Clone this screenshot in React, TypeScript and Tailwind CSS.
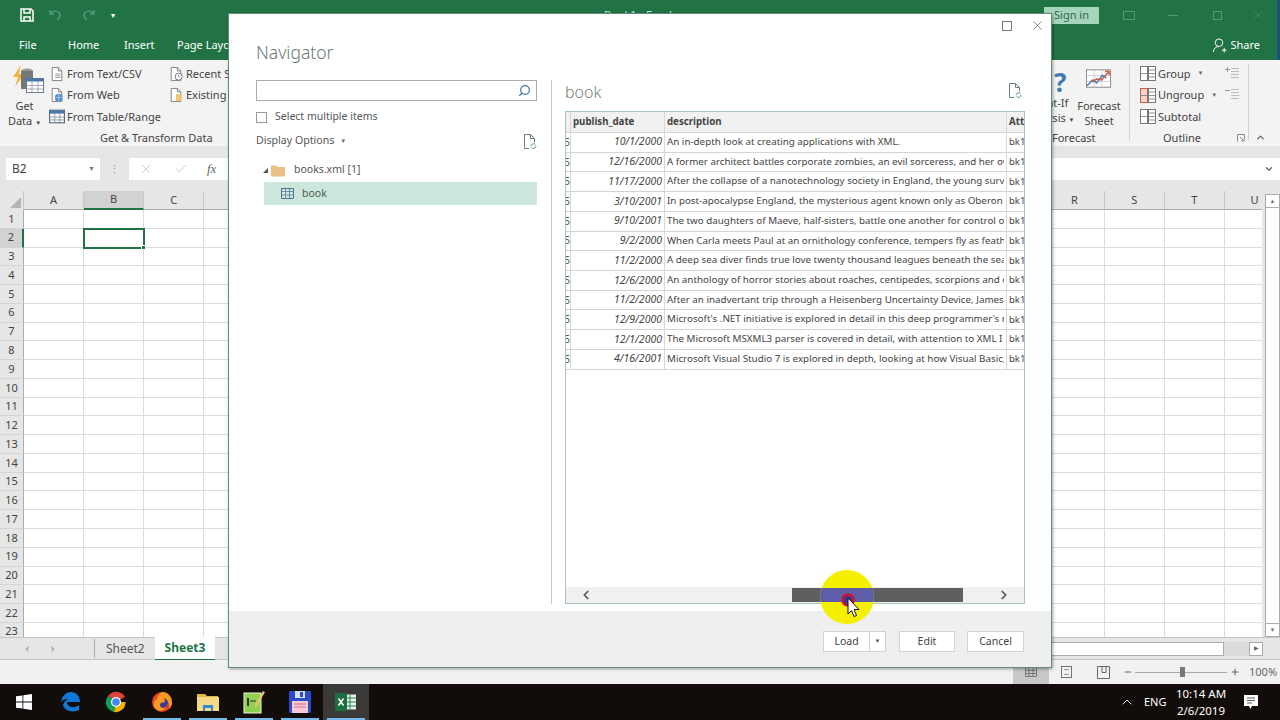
import React from "react";
import { ChevronLeft, ChevronRight, ChevronUp, ChevronDown, Check, X, Search, Minus, Plus } from "lucide-react";

const columns = ["A", "B", "C", "D", "E", "F", "G", "H", "I", "J", "K", "L", "M", "N", "O", "P", "Q", "R", "S", "T", "U"];
const rowNumbers = Array.from({ length: 23 }, (_, i) => i + 1);

const books = [
  ["10/1/2000", "An in-depth look at creating applications with XML."],
  ["12/16/2000", "A former architect battles corporate zombies, an evil sorceress, and her ow"],
  ["11/17/2000", "After the collapse of a nanotechnology society in England, the young survi"],
  ["3/10/2001", "In post-apocalypse England, the mysterious agent known only as Oberon h"],
  ["9/10/2001", "The two daughters of Maeve, half-sisters, battle one another for control o"],
  ["9/2/2000", "When Carla meets Paul at an ornithology conference, tempers fly as feath"],
  ["11/2/2000", "A deep sea diver finds true love twenty thousand leagues beneath the sea"],
  ["12/6/2000", "An anthology of horror stories about roaches, centipedes, scorpions and o"],
  ["11/2/2000", "After an inadvertant trip through a Heisenberg Uncertainty Device, James"],
  ["12/9/2000", "Microsoft's .NET initiative is explored in detail in this deep programmer's r"],
  ["12/1/2000", "The Microsoft MSXML3 parser is covered in detail, with attention to XML I"],
  ["4/16/2001", "Microsoft Visual Studio 7 is explored in depth, looking at how Visual Basic,"],
];

const TableIcon = ({ className = "" }: { className?: string }) => (
  <svg viewBox="0 0 14 12" className={className} fill="none">
    <rect x="0.5" y="0.5" width="13" height="11" fill="#fff" stroke="#5b6b7c" />
    <rect x="0.5" y="0.5" width="13" height="3" fill="#4a78a8" />
    <path d="M0.5 6.5h13M0.5 9h13M5 3.5v8M9.5 3.5v8" stroke="#7c8894" strokeWidth="0.7" />
  </svg>
);

const DocIcon = ({ className = "", children }: { className?: string; children?: React.ReactNode }) => (
  <svg viewBox="0 0 16 18" className={className} fill="none">
    <path d="M2.5 1.5h7l4 4v11h-11z" fill="#fff" stroke="#777" />
    <path d="M9.5 1.5v4h4" stroke="#777" />
    {children}
  </svg>
);

const RefreshDoc = () => (
  <svg viewBox="0 0 14 17" className="h-[17px] w-[14px]" fill="none" stroke="#6f7f7a">
    <path d="M6 15.5H1.5v-14h6l4 4v4" />
    <path d="M7.5 1.5v4h4" />
    <path d="M8 13a2.5 2.5 0 0 1 4.5-1.2M13 13a2.5 2.5 0 0 1-4.5 1.4" stroke="#4f9a80" />
  </svg>
);

const SmallCommand = ({ icon, label, caret }: { icon: React.ReactNode; label: string; caret?: boolean }) => (
  <div className="flex h-[21.5px] items-center gap-[3px] whitespace-nowrap text-[11px] text-[#444]">
    <span className="flex w-[15px] justify-center">{icon}</span>
    {label}
    {caret && <span className="ml-[4px] text-[6px] text-[#666]">▼</span>}
  </div>
);

const OutlineIcon = ({ tint }: { tint?: boolean }) => (
  <svg viewBox="0 0 16 15" className="h-[15px] w-[16px] shrink-0" fill="none" stroke="#777">
    <rect x="0.5" y="0.5" width="7" height="14" fill={tint ? "#f3d3cd" : "#fff"} stroke={tint ? "#c9604c" : "#777"} />
    <rect x="8.5" y="0.5" width="7" height="14" fill="#fff" />
    <path d="M8.5 4h7M8.5 7.5h7M8.5 11h7M0.5 7.5h7" strokeWidth="0.8" />
  </svg>
);

const LevelIcon = ({ sign }: { sign: "+" | "-" }) => (
  <svg viewBox="0 0 14 14" className="h-[14px] w-[14px]" fill="none" stroke="#b5b5b5">
    <path d="M6 2.500h8M6 5.500h8M6 8.500h8M6 11.500h8" strokeWidth="0.9" />
    <path d={sign === "+" ? "M0 3.500h5M2.500 1v5" : "M0 3.500h5"} stroke="#999" />
  </svg>
);

const Ribbon = () => (
  <div className="flex h-[86px] shrink-0 bg-[#f3f3f3] text-[11px] text-[#444]">
    <div className="flex w-[228px] shrink-0 flex-col">
      <div className="flex h-[68px]">
        <div className="flex w-[49px] shrink-0 flex-col items-center pt-[5px] leading-[15px]">
          <svg viewBox="0 0 32 30" className="ml-[6px] h-[30px] w-[32px] shrink-0" fill="none">
            <path d="M9 0 1 12h5L3 22l9-13H7z" fill="#f2b33d" />
            <ellipse cx="15" cy="6" rx="6" ry="2.5" fill="#9a9a9a" />
            <rect x="9" y="6" width="12" height="18" fill="#777" />
            <rect x="14.5" y="13.5" width="17" height="14" fill="#fff" stroke="#6b7b8c" />
            <rect x="14.5" y="13.5" width="17" height="3" fill="#4a78a8" />
            <path d="M14.5 20.5h17M14.5 24h17M20 16.5v11M26 16.5v11" stroke="#889" strokeWidth="0.7" />
          </svg>
          <span className="mt-[3px]">Get</span>
          <span>
            Data <span className="text-[6px]">▼</span>
          </span>
        </div>
        <div className="w-[119px] shrink-0 pt-[3px]">
          <SmallCommand
            label="From Text/CSV"
            icon={
              <DocIcon className="h-[16px] w-[14px]">
                <path d="M6 9h6M6 11h6M6 13h6" stroke="#777" strokeWidth="0.8" />
              </DocIcon>
            }
          />
          <SmallCommand
            label="From Web"
            icon={
              <DocIcon className="h-[16px] w-[14px]">
                <circle cx="10" cy="12" r="4.5" fill="#4f8fd0" />
                <path d="M5.5 12h9M10 7.5v9" stroke="#cfe3f5" strokeWidth="0.7" />
              </DocIcon>
            }
          />
          <SmallCommand label="From Table/Range" icon={<TableIcon className="h-[15px] w-[16px] shrink-0" />} />
        </div>
        <div className="pt-[3px]">
          <SmallCommand
            label="Recent Sources"
            icon={
              <DocIcon className="h-[16px] w-[14px]">
                <circle cx="11" cy="12" r="4" fill="#fff" stroke="#667" />
                <path d="M11 10v2l1.5 1" stroke="#667" strokeWidth="0.8" />
              </DocIcon>
            }
          />
          <SmallCommand
            label="Existing Connections"
            icon={
              <DocIcon className="h-[16px] w-[14px]">
                <rect x="8" y="8" width="6" height="8" fill="#f2c66d" />
              </DocIcon>
            }
          />
        </div>
      </div>
      <div className="pl-[100px] pt-[2px] leading-[15px]">Get &amp; Transform Data</div>
    </div>
    <div className="ml-auto flex">
      <div className="flex w-[109px] flex-col">
        <div className="flex h-[68px]">
          <div className="flex w-[58.5px] shrink-0 flex-col leading-[15px]">
            <div className="flex h-[38px] flex-col items-end pr-[12px] pt-[9px]">
              <span className="text-[26px] font-bold leading-[26px] text-[#3f78b8]">?</span>
            </div>
            <span className="text-center">What-If</span>
            <span className="whitespace-nowrap text-center">
              Analysis <span className="text-[6px]">▼</span>
            </span>
          </div>
          <div className="flex w-[41px] shrink-0 flex-col items-center pt-[8px] leading-[15px]">
            <svg viewBox="0 0 28 24" className="h-[24px] w-[27px] shrink-0" fill="none">
              <rect x="0.5" y="1.5" width="25" height="18" fill="#fff" stroke="#888" />
              <path d="M0.5 7.5h25M0.5 13.5h25M8.5 1.5v18M16.5 1.5v18" stroke="#bbb" strokeWidth="0.7" />
              <path d="M1 18l6-6 4 3 6-8 4 3" stroke="#3f78b8" strokeWidth="1.5" />
              <path d="M6 14l5-3 5 1 8-9M24 3h-4M24 3v4" stroke="#d2573c" strokeWidth="1.5" />
            </svg>
            <span className="mt-[6px]">Forecast</span>
            <span>Sheet</span>
          </div>
        </div>
        <div className="pl-[32px] pt-[2px] leading-[15px]">Forecast</div>
      </div>
      <div className="mb-[6px] mt-[4px] w-px bg-[#d0d0d0]" />
      <div className="flex w-[118px] flex-col">
        <div className="flex h-[68px] pl-[10px] pt-[3px]">
          <div>
            <SmallCommand label="Group" caret icon={<OutlineIcon />} />
            <SmallCommand label="Ungroup" caret icon={<OutlineIcon tint />} />
            <SmallCommand label="Subtotal" icon={<OutlineIcon />} />
          </div>
          <div className="ml-auto mr-[9px] flex flex-col gap-[7px] pt-[3px]">
            <LevelIcon sign="+" />
            <LevelIcon sign="-" />
          </div>
        </div>
        <div className="flex items-center pl-[33px] pt-[2px] leading-[15px]">
          Outline
          <svg viewBox="0 0 8 8" className="ml-auto mr-[3px] h-[8px] w-[8px]" fill="none" stroke="#888">
            <path d="M.5 7.500v-7h7v4M3 3l4 4M7 4.500V7H4.500" />
          </svg>
        </div>
      </div>
      <div className="mb-[6px] mt-[4px] w-px bg-[#d0d0d0]" />
      <div className="flex w-[31px] items-end justify-center pb-[3px]">
        <ChevronUp size={11} strokeWidth={3} className="mr-[8px] text-[#666]" />
      </div>
    </div>
  </div>
);

const TitleBar = () => (
  <div className="flex h-[30px] shrink-0 items-center text-white">
    <svg viewBox="0 0 14 14" className="ml-[20px] h-[14px] w-[14px]" fill="none" stroke="#fff" strokeWidth="1.5">
      <path d="M1 1h10l2 2v10H1z" />
      <path d="M4 1v4h6V1M4 13V9h6v4" />
    </svg>
    <svg viewBox="0 0 16 12" className="ml-[15px] h-[12px] w-[16px]" fill="none" stroke="#57967a" strokeWidth="1.5">
      <path d="M1 1v4h4M1 5c3-4 9-4 10 1 0 2-2 4-3 5" />
    </svg>
    <svg viewBox="0 0 16 12" className="ml-[16px] h-[12px] w-[16px]" fill="none" stroke="#57967a" strokeWidth="1.5">
      <path d="M13 1v4H9M13 5C10 1 4 1 3 6c0 2 2 4 3 5" />
    </svg>
    <span className="ml-[14px] text-[8px] leading-none">▾</span>
    <span className="ml-[489px] text-[11px] text-[#d7e8df]">Book1 - Excel</span>
    <div className="ml-auto flex items-center">
      <div className="mr-[8px] flex h-[17px] w-[55px] items-center justify-center bg-[#a6d5bb] text-[11px] text-[#2f6b4d]">
        Sign in
      </div>
      <div className="flex w-[44px] justify-center">
        <div className="h-[9px] w-[12px] border border-[#57967a]" />
      </div>
      <div className="flex w-[44px] justify-center">
        <div className="h-px w-[10px] bg-[#57967a]" />
      </div>
      <div className="flex w-[44px] justify-center">
        <div className="h-[9px] w-[9px] border border-[#57967a]" />
      </div>
      <div className="flex w-[38px] justify-center">
        <X size={14} strokeWidth={1} className="text-[#57967a]" />
      </div>
    </div>
  </div>
);

const TabRow = () => (
  <div className="flex h-[30px] shrink-0 items-center whitespace-nowrap text-[11px] text-white">
    <span className="ml-[19px] w-[49px]">File</span>
    <span className="w-[56px]">Home</span>
    <span className="w-[53px]">Insert</span>
    <span>Page Layout</span>
    <div className="ml-auto mr-[17px] flex items-center gap-[3px]">
      <svg viewBox="0 0 15 16" className="h-[15px] w-[15px]" fill="none" stroke="#fff">
        <circle cx="7" cy="5" r="4" />
        <path d="M1 15c0-4 3-6 6-6M10 13h5M12.500 10.500v5" />
      </svg>
      Share
    </div>
  </div>
);

const Sheet = () => (
  <div className="flex min-h-0 flex-1 overflow-hidden bg-[#e6e6e6]">
    <div className="w-[1262px] shrink-0 overflow-hidden">
      <div className="flex h-[19px] text-[11px] text-[#444]">
        <div className="flex w-[24px] shrink-0 items-end justify-end border-r border-[#c6c6c6] p-[2px]">
          <div className="h-0 w-0 border-b-[11px] border-l-[11px] border-b-[#b5b5b5] border-l-transparent" />
        </div>
        {columns.map((c) => (
          <div
            key={c}
            className={`flex w-[60.06px] shrink-0 items-center justify-center border-r border-[#c6c6c6] border-b ${
              c === "B" ? "border-b-2 border-b-[#217346] bg-[#d2d2d2]" : "border-b-[#ababab]"
            }`}
          >
            {c}
          </div>
        ))}
      </div>
      {rowNumbers.map((n) => (
        <div key={n} className="flex h-[18.77px] text-[11px] text-[#444]">
          <div
            className={`flex w-[24px] shrink-0 items-center justify-center border-b border-r border-b-[#d4d4d4] ${
              n === 2 ? "border-r-2 border-r-[#217346] bg-[#d2d2d2]" : "border-r-[#ababab]"
            }`}
          >
            {n}
          </div>
          {columns.map((c) => (
            <div
              key={c}
              className={`relative w-[60.06px] shrink-0 border-b border-r border-[#dcdcdc] bg-white ${
                n === 2 && c === "B" ? "z-10 outline-2 -outline-offset-1 outline-[#217346]" : ""
              }`}
            >
              {n === 2 && c === "B" && (
                <div className="absolute -bottom-[3px] -right-[3px] h-[5px] w-[5px] border border-white bg-[#217346]" />
              )}
            </div>
          ))}
        </div>
      ))}
    </div>
    <div className="ml-[3px] mt-[3px] flex flex-1 flex-col justify-between border border-[#ababab] bg-white">
      <div className="flex h-[13px] items-center justify-center border-b border-[#ababab] text-[6px] text-[#777]">▲</div>
      <div className="flex h-[13px] items-center justify-center border-t border-[#ababab] text-[6px] text-[#777]">▼</div>
    </div>
  </div>
);

const FormulaBar = () => (
  <div className="flex h-[45px] shrink-0 items-start bg-[#e6e6e6] pt-[12px]">
    <div className="ml-[6px] flex h-[22px] w-[94px] items-center justify-between bg-white pl-[6px] pr-[5px] text-[12px] text-[#444]">
      B2
      <span className="text-[7px] text-[#777]">▼</span>
    </div>
    <div className="flex h-[22px] w-[29px] items-center justify-center text-[11px] text-[#999]">⋮</div>
    <div className="flex h-[22px] flex-1 items-center bg-white pl-[10px]">
      <X size={14} strokeWidth={1.5} className="text-[#c4c4c4]" />
      <Check size={14} strokeWidth={1.5} className="ml-[21px] text-[#c4c4c4]" />
      <span className="ml-[19px] font-['Liberation_Serif',serif] text-[13px] italic text-[#666]">fx</span>
      <ChevronDown size={10} strokeWidth={3} className="ml-auto mr-[6px] text-[#666]" />
    </div>
  </div>
);

const SheetTabs = () => (
  <div className="flex h-[23px] shrink-0 items-center border-y border-[#c6c6c6] bg-[#e6e6e6] text-[12px]">
    <ChevronLeft size={10} fill="#aaa" className="ml-[22px] text-[#aaa]" />
    <ChevronRight size={10} fill="#aaa" className="ml-[16px] text-[#aaa]" />
    <div className="ml-[36px] h-[19px] w-px bg-[#aaa]" />
    <span className="ml-[11px] w-[49px] text-[#555]">Sheet2</span>
    <div className="flex h-[24px] w-[60px] items-center justify-center border-b-2 border-[#217346] bg-white font-bold text-[#217346]">
      Sheet3
    </div>
    <div className="ml-auto flex h-[14px] items-stretch pr-[17px]">
      <div className="w-[175px] border border-[#ababab] bg-white" />
      <div className="w-[25px] bg-[#dcdcdc]" />
      <div className="flex w-[14px] items-center justify-center border border-[#ababab] bg-white text-[6px] text-[#666]">
        ▶
      </div>
    </div>
  </div>
);

const StatusBar = () => (
  <div className="flex h-[24px] shrink-0 items-center bg-[#f1f1f1] text-[#666]">
    <div className="ml-auto flex h-full w-[36px] items-center justify-center bg-[#c8c8c8]">
      <svg viewBox="0 0 12 10" className="h-[10px] w-[12px]" fill="none" stroke="#666" strokeWidth="0.8">
        <path d="M.5.5h11v9H.5zM.5 3.500h11M.5 6.500h11M4 .5v9M8 .5v9" />
      </svg>
    </div>
    <div className="ml-[12px] h-[12px] w-[11px] border border-[#777] p-[2px]">
      <div className="h-full border-y border-[#999]" />
    </div>
    <svg viewBox="0 0 13 13" className="ml-[25px] h-[13px] w-[13px]" fill="none" stroke="#666">
      <path d="M.5.5h12v12H.5zM5 .5v6h4v-6" />
    </svg>
    <Minus size={10} strokeWidth={2.5} className="ml-[13px] text-[#666]" />
    <div className="relative ml-[2px] h-px w-[92px] bg-[#aaa]">
      <div className="absolute -top-[5px] left-[44.5px] h-[10px] w-[5px] bg-[#777]" />
    </div>
    <Plus size={10} strokeWidth={2.5} className="ml-[3px] text-[#666]" />
    <span className="ml-[9px] w-[31px] whitespace-nowrap text-[11px]">100%</span>
  </div>
);

const TaskIcon = ({ children, running = true, active = false }: { children: React.ReactNode; running?: boolean; active?: boolean }) => (
  <div className={`relative flex h-[36px] w-[46px] items-center justify-center ${active ? "bg-[#3c3a38]" : ""}`}>
    {children}
    {running && <div className="absolute bottom-0 left-[4px] right-[4px] h-[2px] bg-[#76b9ed]" />}
  </div>
);

const Taskbar = () => (
  <div className="flex h-[36px] shrink-0 items-center bg-[#120c0a] text-white">
    <div className="flex w-[47px] justify-center">
      <svg viewBox="0 0 16 16" className="h-[16px] w-[16px]" fill="#fff">
        <path d="M0 2.300 6.500 1.400v6.200H0zM7.300 1.300 16 0v7.600H7.300zM0 8.400h6.500v6.200L0 13.700zM7.300 8.400H16V16l-8.700-1.300z" />
      </svg>
    </div>
    <TaskIcon running={false}>
      <svg viewBox="0 0 22 22" className="h-[22px] w-[22px]" fill="none">
        <path d="M2 11C3 4 8 1 12 1c5 0 9 4 9 10H8c0 5 7 7 12 3v5c-6 3-15 1-16-5 1-3 3-5 5-6-3 0-6 1-7 3z" fill="#0f78d4" />
      </svg>
    </TaskIcon>
    <TaskIcon running={false}>
      <svg viewBox="0 0 22 22" className="h-[22px] w-[22px]">
        <path d="M11 11 3 5a10 10 0 0 1 17 1z" fill="#db4437" />
        <path d="M11 11 3 5a10 10 0 0 0 6 16z" fill="#0f9d58" />
        <path d="M11 11h9.500A10 10 0 0 1 9 21z" fill="#f4b400" />
        <circle cx="11" cy="11" r="5" fill="#fff" />
        <circle cx="11" cy="11" r="3.800" fill="#4285f4" />
      </svg>
    </TaskIcon>
    <TaskIcon>
      <svg viewBox="0 0 22 22" className="h-[22px] w-[22px]">
        <circle cx="11" cy="11" r="10" fill="#e8412a" />
        <circle cx="11" cy="11" r="6" fill="#3b3b9e" />
        <path d="M11 1c6 0 10 5 10 10 0 3-1 5-3 7 1-5-1-9-5-11 1 2 1 3 0 5-2-1-4 0-4 2 0 3 4 4 6 2-1 4-7 5-10 2-3-2-3-6-1-9 1 1 1 0 2-2 1-3 3-5 5-6z" fill="#f79a1f" />
      </svg>
    </TaskIcon>
    <TaskIcon>
      <svg viewBox="0 0 22 18" className="h-[18px] w-[22px]">
        <path d="M0 1h8l2 2h11v3H0z" fill="#e6b54a" />
        <rect y="4" width="22" height="14" fill="#f6d987" />
        <path d="M6 18v-6h10v6h-2v-3H8v3z" fill="#2c8fd6" />
      </svg>
    </TaskIcon>
    <TaskIcon>
      <svg viewBox="0 0 22 24" className="h-[24px] w-[22px]">
        <rect x="1" y="3" width="17" height="20" fill="#8fd14f" stroke="#f3f3d8" />
        <rect x="4" y="8" width="2" height="8" fill="#333" />
        <path d="M7 11h6" stroke="#333" />
        <path d="M12 15 20 1l2 1-8 14-3 2z" fill="#e9c46a" />
      </svg>
    </TaskIcon>
    <TaskIcon>
      <svg viewBox="0 0 22 22" className="h-[22px] w-[22px]">
        <rect width="22" height="22" rx="1" fill="#2a4cc7" />
        <rect x="6" y="0" width="10" height="7" fill="#d7dcef" />
        <rect x="11" y="1" width="3" height="5" fill="#2a4cc7" />
        <rect x="3" y="10" width="16" height="12" fill="#f7c9d4" />
        <path d="M5 13h12M5 16h12" stroke="#d56a86" />
      </svg>
    </TaskIcon>
    <TaskIcon active>
      <svg viewBox="0 0 22 18" className="h-[18px] w-[22px]">
        <rect x="9" y="1.500" width="12" height="15" fill="#e8f2ec" />
        <path d="M9 5h12M9 9h12M9 13h12M15 1.500v15" stroke="#2f7d55" />
        <rect x="0" y="0" width="12" height="18" rx="1" fill="#1d6f42" />
        <path d="M3.500 5.500l5 7M8.500 5.500l-5 7" stroke="#fff" strokeWidth="1.500" />
      </svg>
    </TaskIcon>
    <div className="ml-auto flex h-full items-center">
      <ChevronUp size={16} strokeWidth={1.5} className="text-[#ddd]" />
      <span className="ml-[9px] w-[24px] text-[11px]">ENG</span>
      <div className="ml-[2px] w-[62px] text-center text-[11.5px] leading-[17px]">
        <div>10:14 AM</div>
        <div>2/6/2019</div>
      </div>
      <div className="ml-[11px] mr-[21px]">
        <svg viewBox="0 0 16 16" className="h-[16px] w-[16px]">
          <path d="M1 1h14v11H9l-1.500 3L6 12H1z" fill="#fff" />
          <path d="M4 4h8M4 6.500h8M4 9h5" stroke="#333" strokeWidth="0.8" />
        </svg>
      </div>
    </div>
  </div>
);

const DialogButton = ({ label, className = "" }: { label: string; className?: string }) => (
  <div className={`flex h-[21px] items-center justify-center border border-[#d2d2d2] bg-white text-[10.5px] text-[#444] ${className}`}>
    {label}
  </div>
);

const Navigator = () => (
  <div className="absolute left-[228px] top-[13px] z-20 flex h-[655px] w-[824px] flex-col border border-[#5d8e79] bg-white shadow-[1px_1px_3px_rgba(0,0,0,0.35)]">
    <div className="absolute right-[6px] top-[4px] flex items-center gap-[18px]">
      <div className="h-[10px] w-[10px] border border-[#777]" />
      <X size={15} strokeWidth={1} className="text-[#444]" />
    </div>
    <div className="flex min-h-0 flex-1 flex-col pl-[27px] pr-[26px] pt-[25px]">
      <div className="h-[41px] text-[17.500px] font-light leading-[27px] text-[#667a72]">Navigator</div>
      <div className="flex min-h-0 flex-1 pb-[7px]">
        <div className="w-[281px] shrink-0 text-[#555]">
          <div className="flex h-[21px] items-center justify-end border border-[#ababab] bg-white pr-[5px]">
            <Search size={13} strokeWidth={2.2} className="-scale-x-100 text-[#3f6f96]" />
          </div>
          <div className="mt-[10px] flex h-[12px] items-center text-[10.5px]">
            <div className="h-[11px] w-[11px] border border-[#9a9a9a]" />
            <span className="ml-[8px]">Select multiple items</span>
          </div>
          <div className="mt-[6px] flex h-[24px] items-center text-[10.6px]">
            Display Options
            <span className="ml-[6px] text-[6px] text-[#666]">▼</span>
            <span className="ml-auto">
              <RefreshDoc />
            </span>
          </div>
          <div className="mt-[6px] flex h-[22px] items-center pl-[7px] text-[10.5px]">
            <div className="h-0 w-0 border-b-[5px] border-l-[5px] border-b-[#555] border-l-transparent" />
            <svg viewBox="0 0 14 12" className="ml-[3px] h-[13px] w-[14px]">
              <path d="M0 1h5l1.500 1.500H14V12H0z" fill="#e8c285" />
            </svg>
            <span className="ml-[9px]">books.xml [1]</span>
          </div>
          <div className="ml-[8px] mt-px flex h-[23px] items-center bg-[#cce8dc] pl-[17px] text-[10.5px]">
            <svg viewBox="0 0 13 11" className="h-[11px] w-[13px]" fill="none" stroke="#52708c">
              <path d="M.5.5h12v10H.5z" />
              <path d="M.5 3.500h12M.5 7h12M4.500.5v10M8.500.5v10" strokeWidth="0.7" />
            </svg>
            <span className="ml-[8px]">book</span>
          </div>
        </div>
        <div className="ml-[14px] w-px bg-[#c8c8c8]" />
        <div className="ml-[13px] flex min-w-0 flex-1 flex-col">
          <div className="flex h-[31px] shrink-0 items-start justify-between pr-[3px]">
            <span className="text-[16px] font-light leading-[24px] text-[#75807c]">book</span>
            <span className="mt-[2px]">
              <RefreshDoc />
            </span>
          </div>
          <div className="flex min-h-0 flex-1 flex-col overflow-hidden border border-[#a9c6bb]">
            <div className="flex h-[21px] shrink-0 items-center border-b border-[#d4d4d4] bg-[#f1f1f1] text-[9.700px] font-bold text-[#444]">
              <div className="h-full w-[5px] shrink-0 border-r border-[#d8d8d8]" />
              <div className="flex h-full w-[94px] shrink-0 items-center border-r border-[#d8d8d8] pl-[2px]">publish_date</div>
              <div className="flex h-full w-[342px] shrink-0 items-center border-r border-[#d8d8d8] pl-[2px]">description</div>
              <div className="pl-[2px]">Att</div>
            </div>
            {books.map(([date, text]) => (
              <div key={text} className="flex h-[19.73px] shrink-0 items-center border-b border-[#d4d4d4] text-[#444]">
                <div className="flex h-full w-[5px] shrink-0 items-center justify-end overflow-hidden border-r border-[#d8d8d8] text-[10px] text-[#555]">5</div>
                <div className="flex h-full w-[94px] shrink-0 items-center justify-end border-r border-[#d8d8d8] pr-[2px] text-[10.5px] italic">{date}</div>
                <div className="flex h-full w-[342px] shrink-0 items-center border-r border-[#d8d8d8] pl-[2px] pr-[2px] text-[9.800px]">
                  <div className="min-w-0 flex-1 overflow-hidden whitespace-nowrap">{text}</div>
                </div>
                <div className="pl-[2px] text-[9.500px]">bk1</div>
              </div>
            ))}
            <div className="mt-auto flex h-[16px] shrink-0 items-center bg-[#f0f0f0]">
              <ChevronLeft size={14} strokeWidth={3} className="ml-[13px] text-[#555]" />
              <div className="ml-[199px] h-[14px] w-[171px] bg-[#5f5f5f]" />
              <ChevronRight size={14} strokeWidth={3} className="ml-auto mr-[13px] text-[#555]" />
            </div>
          </div>
        </div>
      </div>
    </div>
    <div className="flex h-[56px] shrink-0 items-start justify-end bg-[#efefef] pr-[27px] pt-[20px]">
      <DialogButton label="Load" className="w-[47px]" />
      <div className="flex h-[21px] w-[16px] items-center justify-center border border-l-0 border-[#d2d2d2] bg-white text-[6px] text-[#555]">▼</div>
      <DialogButton label="Edit" className="ml-[13px] w-[56px]" />
      <DialogButton label="Cancel" className="ml-[12px] w-[57px]" />
    </div>
  </div>
);

// recording highlight round the pointer, lies over the dialog
const PointerHighlight = () => (
  <svg viewBox="0 0 60 60" className="absolute left-[817px] top-[567px] z-30 h-[60px] w-[60px]">
    <defs>
      <clipPath id="spot">
        <circle cx="30" cy="30" r="27" />
      </clipPath>
    </defs>
    <circle cx="30" cy="30" r="27" fill="#f4f000" />
    <rect x="3" y="21" width="54" height="14" fill="#5d5da8" clipPath="url(#spot)" />
    <circle cx="31" cy="33" r="5.500" fill="#3a3a9a" stroke="#d8102c" strokeWidth="2.500" />
    <path d="M31 31v16l3.500-3.500 2.500 6 2.500-1-2.500-6h5z" fill="#fff" stroke="#111" strokeWidth="1" />
  </svg>
);

export default function App() {
  return (
    <div className="relative flex h-[720px] w-[1280px] flex-col overflow-hidden bg-[#e6e6e6] font-['Noto_Sans',sans-serif]">
      <div className="flex shrink-0 bg-[#217346]">
        <div className="min-w-0 flex-1">
          <TitleBar />
          <TabRow />
        </div>
        <div className="w-[3px] bg-[#1d4f78]" />
      </div>
      <Ribbon />
      <FormulaBar />
      <Sheet />
      <SheetTabs />
      <StatusBar />
      <Taskbar />
      <Navigator />
      <PointerHighlight />
    </div>
  );
}
